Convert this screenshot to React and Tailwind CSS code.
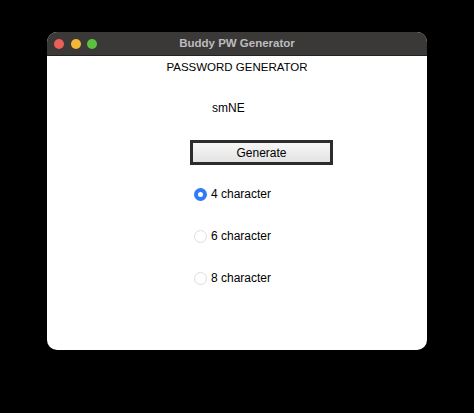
import React, { useState } from "react";

const options = [4, 6, 8];

function Radio({ checked }) {
  return checked ? (
    <span className="w-[13px] h-[13px] rounded-full bg-[#2f7cf6] flex items-center justify-center">
      <span className="w-[5px] h-[5px] rounded-full bg-white" />
    </span>
  ) : (
    <span className="w-[13px] h-[13px] rounded-full border border-[#dedede] bg-white" />
  );
}

export default function App() {
  const [len, setLen] = useState(4);
  return (
    <div className="w-[474px] h-[413px] bg-black pt-[32px] pl-[47px] font-['Liberation_Sans',Arial,sans-serif]">
      {/* Window */}
      <div className="w-[380px] h-[318px] rounded-[10px] overflow-hidden bg-white flex flex-col">
        {/* Title bar */}
        <div className="relative h-[24px] bg-[#3a3938] flex items-center justify-center border-b border-[#222]">
          <div className="absolute left-[7px] top-[7px] flex gap-[6.5px]">
            <span className="w-[10px] h-[10px] rounded-full bg-[#ec5f57]" />
            <span className="w-[10px] h-[10px] rounded-full bg-[#f2b835]" />
            <span className="w-[10px] h-[10px] rounded-full bg-[#5bc13f]" />
          </div>
          <span className="text-[11.5px] font-bold text-[#bdbdbd]">Buddy PW Generator</span>
        </div>

        {/* Body */}
        <div className="flex flex-col text-black">
          <div className="h-[24px] flex items-center justify-center text-[11.5px]">
            PASSWORD GENERATOR
          </div>
          <div className="pl-[143px] flex flex-col">
            <div className="mt-[16px] h-[24px] flex items-center pl-[22px] text-[12px]">smNE</div>
            <button className="mt-[20px] w-[143px] h-[25px] border-[3px] border-[#2c2c2c] bg-gradient-to-b from-[#f7f7f7] to-[#e3e3e3] text-[12px] flex items-center justify-center">
              Generate
            </button>
            <div className="mt-[17px] flex flex-col gap-[18px] pl-[4px]">
              {options.map((n) => (
                <label
                  key={n}
                  onClick={() => setLen(n)}
                  className="h-[24px] flex items-center gap-[4px] text-[12px] cursor-pointer"
                >
                  <Radio checked={len === n} />
                  <span>{n} character</span>
                </label>
              ))}
            </div>
          </div>
        </div>
      </div>
    </div>
  );
}
